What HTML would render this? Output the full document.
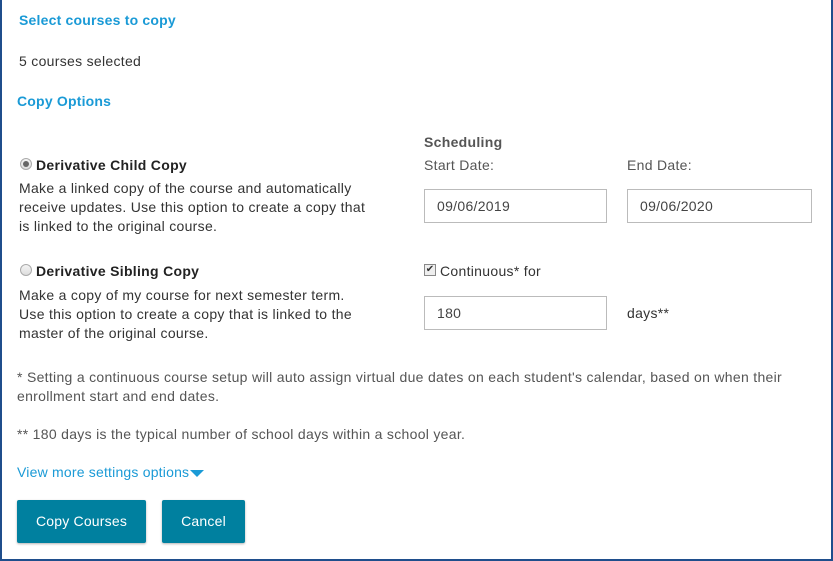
<!DOCTYPE html>
<html><head><style>
*{margin:0;padding:0;box-sizing:border-box}
body{width:833px;height:561px;background:#fff;font-family:"Liberation Sans",sans-serif;font-size:14px;color:#333;position:relative;overflow:hidden;letter-spacing:0.3px}
.frame{position:absolute;left:0;top:0;width:833px;height:561px;border:2px solid #1f4e8c;border-top:none}
.a{position:absolute;white-space:nowrap}
.h{color:#1a9ad6;font-weight:bold;letter-spacing:0.2px}
.b{font-weight:bold;color:#222;letter-spacing:0.3px}
.inp{position:absolute;height:34px;border:1px solid #bbb;padding-left:12px;line-height:32px;color:#444}
.btn{position:absolute;top:500px;height:43px;background:#00809f;color:#fff;border-radius:2px;text-align:center;line-height:43px;box-shadow:0 1px 2px rgba(0,0,0,.3);letter-spacing:0.2px}
.radio{position:absolute;width:12px;height:12px;border-radius:50%;border:1px solid #aaa;background:linear-gradient(#f4f4f4,#ddd)}
p.t{position:absolute;line-height:19px;white-space:nowrap}
</style></head><body>
<div class="frame"></div>
<div class="a h" style="left:19px;top:12px">Select courses to copy</div>
<div class="a" style="left:19px;top:53px">5 courses selected</div>
<div class="a h" style="left:17px;top:93px">Copy Options</div>
<div class="a b" style="left:424px;top:134px;color:#555">Scheduling</div>
<div class="a" style="left:424px;top:157px;color:#555">Start Date:</div>
<div class="a" style="left:627px;top:157px;color:#555">End Date:</div>
<div class="radio" style="left:20px;top:158px"><div style="width:6px;height:6px;border-radius:50%;background:#666;margin:2px"></div></div>
<div class="a b" style="left:36px;top:157px">Derivative Child Copy</div>
<p class="t" style="left:19px;top:179px">Make a linked copy of the course and automatically<br>receive updates. Use this option to create a copy that<br>is linked to the original course.</p>
<div class="inp" style="left:424px;top:189px;width:183px">09/06/2019</div>
<div class="inp" style="left:627px;top:189px;width:185px">09/06/2020</div>
<div class="radio" style="left:20px;top:264px"></div>
<div class="a b" style="left:36px;top:263px">Derivative Sibling Copy</div>
<p class="t" style="left:19px;top:286px">Make a copy of my course for next semester term.<br>Use this option to create a copy that is linked to the<br>master of the original course.</p>
<div style="position:absolute;left:424px;top:264px;width:12px;height:12px;border:1px solid #888;background:#eee;font-size:10px;line-height:10px;text-align:center;color:#333;letter-spacing:0">✔</div>
<div class="a" style="left:440px;top:263px">Continuous* for</div>
<div class="inp" style="left:424px;top:296px;width:183px">180</div>
<div class="a" style="left:627px;top:305px">days**</div>
<p class="t" style="left:17px;top:368px;color:#555">* Setting a continuous course setup will auto assign virtual due dates on each student's calendar, based on when their<br>enrollment start and end dates.</p>
<div class="a" style="left:17px;top:426px;color:#555">** 180 days is the typical number of school days within a school year.</div>
<div class="a" style="left:17px;top:464px;color:#1a9ad6;letter-spacing:0.2px">View more settings options<span style="display:inline-block;width:0;height:0;border-left:7px solid transparent;border-right:7px solid transparent;border-top:7px solid #1a9ad6;vertical-align:middle;margin-left:1px"></span></div>
<div class="btn" style="left:17px;width:129px">Copy Courses</div>
<div class="btn" style="left:162px;width:83px">Cancel</div>
</body></html>
